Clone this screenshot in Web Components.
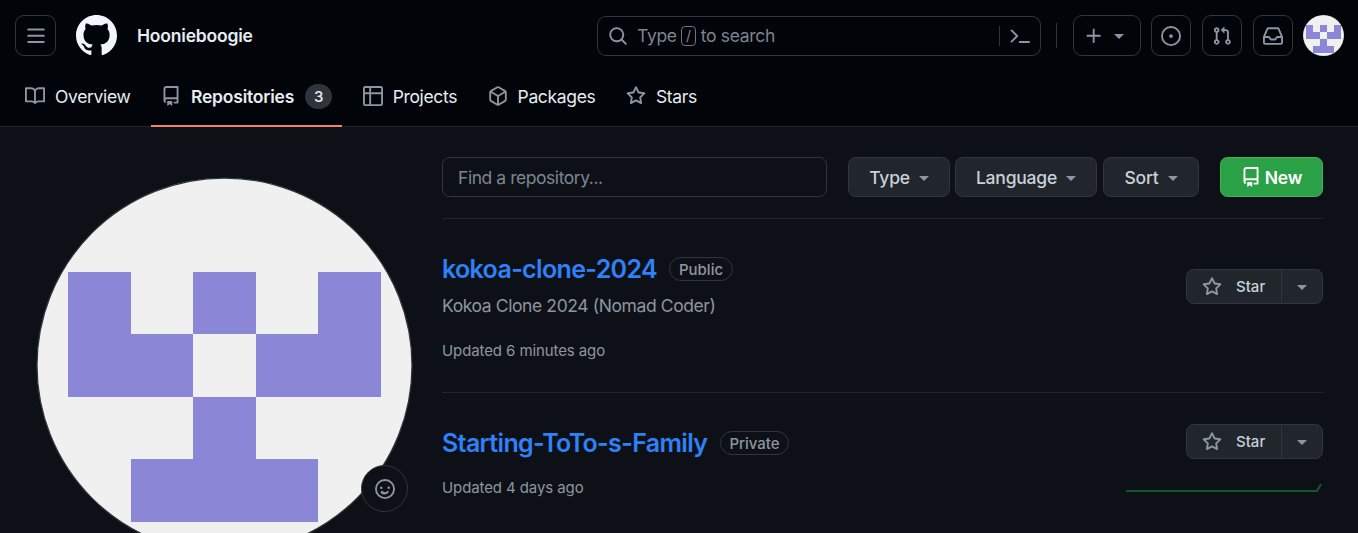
<!DOCTYPE html>
<html lang="en">
<head>
<meta charset="utf-8">
<title>Hoonieboogie repositories</title>
<style>
  html, body { margin: 0; height: 533px; overflow: hidden; background: #0d1117; }
  body { font-family: Inter, "Liberation Sans", sans-serif; color: #e6edf3; }
</style>
</head>
<body>
<profile-page></profile-page>

<script>
const ICONS = {
  bars: 'M1 2.75A.75.75 0 0 1 1.75 2h12.5a.75.75 0 0 1 0 1.5H1.75A.75.75 0 0 1 1 2.75Zm0 5A.75.75 0 0 1 1.75 7h12.5a.75.75 0 0 1 0 1.5H1.75A.75.75 0 0 1 1 7.75ZM1.75 12h12.5a.75.75 0 0 1 0 1.5H1.75a.75.75 0 0 1 0-1.5Z',
  mark: 'M8 0c4.42 0 8 3.58 8 8a8.013 8.013 0 0 1-5.45 7.59c-.4.08-.55-.17-.55-.38 0-.27.01-1.13.01-2.2 0-.75-.25-1.23-.54-1.48 1.78-.2 3.65-.88 3.65-3.95 0-.88-.31-1.59-.82-2.15.08-.2.36-1.02-.08-2.12 0 0-.67-.22-2.2.82-.64-.18-1.32-.27-2-.27-.68 0-1.36.09-2 .27-1.53-1.03-2.2-.82-2.2-.82-.44 1.1-.16 1.92-.08 2.12-.51.56-.82 1.28-.82 2.15 0 3.06 1.86 3.75 3.64 3.95-.23.2-.44.55-.51 1.07-.46.21-1.61.55-2.33-.66-.15-.24-.6-.83-1.23-.82-.67.01-.27.38.01.53.34.19.73.9.82 1.13.16.45.68 1.31 2.69.94 0 .67.01 1.3.01 1.49 0 .21-.15.45-.55.38A7.995 7.995 0 0 1 0 8c0-4.42 3.58-8 8-8Z',
  book: 'M0 1.75A.75.75 0 0 1 .75 1h4.253c1.227 0 2.317.59 3 1.501A3.743 3.743 0 0 1 11.006 1h4.245a.75.75 0 0 1 .75.75v10.5a.75.75 0 0 1-.75.75h-4.507a2.25 2.25 0 0 0-1.591.659l-.622.621a.75.75 0 0 1-1.06 0l-.622-.621A2.25 2.25 0 0 0 5.258 13H.75a.75.75 0 0 1-.75-.75Zm7.251 10.324.004-5.073-.002-2.253A2.25 2.25 0 0 0 5.003 2.5H1.5v9h3.757a3.75 3.75 0 0 1 1.994.574ZM8.755 4.75l-.004 7.322a3.752 3.752 0 0 1 1.992-.572H14.5v-9h-3.495a2.25 2.25 0 0 0-2.25 2.25Z',
  repo: 'M2 2.5A2.5 2.5 0 0 1 4.5 0h8.75a.75.75 0 0 1 .75.75v12.5a.75.75 0 0 1-.75.75h-2.5a.75.75 0 0 1 0-1.5h1.75v-2h-8a1 1 0 0 0-.714 1.7.75.75 0 1 1-1.072 1.05A2.495 2.495 0 0 1 2 11.5Zm10.5-1h-8a1 1 0 0 0-1 1v6.708A2.486 2.486 0 0 1 4.5 9h8ZM5 12.25a.25.25 0 0 1 .25-.25h3.5a.25.25 0 0 1 .25.25v3.25a.25.25 0 0 1-.4.2l-1.45-1.087a.249.249 0 0 0-.3 0L5.4 15.7a.25.25 0 0 1-.4-.2Z',
  table: 'M0 1.75C0 .784.784 0 1.75 0h12.5C15.216 0 16 .784 16 1.75v12.5A1.75 1.75 0 0 1 14.25 16H1.75A1.75 1.75 0 0 1 0 14.25ZM6.5 6.5v8h7.75a.25.25 0 0 0 .25-.25V6.5Zm8-1.5V1.75a.25.25 0 0 0-.25-.25H6.5V5Zm-13 1.5v7.75c0 .138.112.25.25.25H5v-8ZM5 5V1.5H1.75a.25.25 0 0 0-.25.25V5Z',
  package: 'm8.878.392 5.25 3.045c.54.314.872.89.872 1.514v6.098a1.75 1.75 0 0 1-.872 1.514l-5.25 3.045a1.75 1.75 0 0 1-1.756 0l-5.25-3.045A1.75 1.75 0 0 1 1 11.049V4.951c0-.624.332-1.201.872-1.514L7.122.392a1.75 1.75 0 0 1 1.756 0ZM7.875 1.69l-4.63 2.685L8 7.133l4.755-2.758-4.63-2.685a.248.248 0 0 0-.25 0ZM2.5 5.677v5.372c0 .09.047.171.125.216l4.625 2.683V8.432Zm6.25 8.271 4.625-2.683a.25.25 0 0 0 .125-.216V5.677L8.75 8.432Z',
  star: 'M8 .25a.75.75 0 0 1 .673.418l1.882 3.815 4.21.612a.75.75 0 0 1 .416 1.279l-3.046 2.97.719 4.192a.751.751 0 0 1-1.088.791L8 12.347l-3.766 1.98a.75.75 0 0 1-1.088-.79l.72-4.194L.818 6.374a.75.75 0 0 1 .416-1.28l4.21-.611L7.327.668A.75.75 0 0 1 8 .25Zm0 2.445L6.615 5.5a.75.75 0 0 1-.564.41l-3.097.45 2.24 2.184a.75.75 0 0 1 .216.664l-.528 3.084 2.769-1.456a.75.75 0 0 1 .698 0l2.77 1.456-.53-3.084a.75.75 0 0 1 .216-.664l2.24-2.183-3.096-.45a.75.75 0 0 1-.564-.41L8 2.694Z',
  search: 'M10.68 11.74a6 6 0 0 1-7.922-8.982 6 6 0 0 1 8.982 7.922l3.04 3.04a.749.749 0 0 1-.326 1.275.749.749 0 0 1-.734-.215ZM11.5 7a4.499 4.499 0 1 0-8.997 0A4.499 4.499 0 0 0 11.5 7Z',
  terminal: 'M.72 2.97a.75.75 0 0 1 1.06 0l4.5 4.5a.75.75 0 0 1 0 1.06l-4.5 4.5a.75.75 0 0 1-1.06-1.06L4.69 8 .72 4.03a.75.75 0 0 1 0-1.06ZM7.75 12h7.5a.75.75 0 0 1 0 1.5h-7.5a.75.75 0 0 1 0-1.5Z',
  plus: 'M7.75 2a.75.75 0 0 1 .75.75V7h4.25a.75.75 0 0 1 0 1.5H8.5v4.25a.75.75 0 0 1-1.5 0V8.5H2.75a.75.75 0 0 1 0-1.5H7V2.75A.75.75 0 0 1 7.75 2Z',
  issue: 'M8 9.5a1.5 1.5 0 1 0 0-3 1.5 1.5 0 0 0 0 3ZM8 0a8 8 0 1 1 0 16A8 8 0 0 1 8 0ZM1.5 8a6.5 6.5 0 1 0 13 0 6.5 6.5 0 0 0-13 0Z',
  pull: 'M1.5 3.25a2.25 2.25 0 1 1 3 2.122v5.256a2.251 2.251 0 1 1-1.5 0V5.372A2.25 2.25 0 0 1 1.5 3.25Zm5.677-.177L9.573.677A.25.25 0 0 1 10 .854V2.5h1A2.5 2.5 0 0 1 13.5 5v5.628a2.251 2.251 0 1 1-1.5 0V5a1 1 0 0 0-1-1h-1v1.646a.25.25 0 0 1-.427.177L7.177 3.427a.25.25 0 0 1 0-.354ZM3.75 2.5a.75.75 0 1 0 0 1.5.75.75 0 0 0 0-1.5Zm0 9.5a.75.75 0 1 0 0 1.5.75.75 0 0 0 0-1.5Zm8.25.75a.75.75 0 1 0 1.5 0 .75.75 0 0 0-1.5 0Z',
  inbox: 'M2.8 2.06A1.75 1.75 0 0 1 4.41 1h7.18c.7 0 1.333.417 1.61 1.06l2.74 6.395c.04.093.06.194.06.295v4.5A1.75 1.75 0 0 1 14.25 15H1.75A1.75 1.75 0 0 1 0 13.25v-4.5c0-.101.02-.202.06-.295Zm1.61.44a.25.25 0 0 0-.23.152L1.887 8H4.75a.75.75 0 0 1 .6.3L6.625 10h2.75l1.275-1.7a.75.75 0 0 1 .6-.3h2.863L11.82 2.652a.25.25 0 0 0-.23-.152Zm10.09 7h-2.875l-1.275 1.7a.75.75 0 0 1-.6.3h-3.5a.75.75 0 0 1-.6-.3L4.375 9.5H1.5v3.75c0 .138.112.25.25.25h12.5a.25.25 0 0 0 .25-.25Z',
  smiley: 'M8 0a8 8 0 1 1 0 16A8 8 0 0 1 8 0ZM1.5 8a6.5 6.5 0 1 0 13 0 6.5 6.5 0 0 0-13 0Zm3.82 1.636a.75.75 0 0 1 1.038.175l.007.009c.103.118.22.222.35.31.264.178.683.37 1.285.37.602 0 1.02-.192 1.285-.371.13-.088.247-.192.35-.31l.007-.008a.75.75 0 0 1 1.222.87c-.02.03-.4.56-1.245 1.12-.63.418-1.37.638-2.127.629-.946 0-1.652-.308-2.126-.63a3.331 3.331 0 0 1-.715-.657l-.014-.02a.75.75 0 0 1 .183-1.044ZM12 7a1 1 0 1 1-2 0 1 1 0 0 1 2 0ZM5 8a1 1 0 1 1 0-2 1 1 0 0 1 0 2Z'
};

class GhIcon extends HTMLElement {
  connectedCallback() {
    const size = this.getAttribute('size') || 20;
    this.attachShadow({ mode: 'open' });
    this.shadowRoot.innerHTML = `
      <style>
        :host { display: inline-flex; flex: none; width: ${size}px; height: ${size}px; }
        svg { display: block; fill: currentColor; }
      </style>
      <svg width="${size}" height="${size}" viewBox="0 0 16 16" aria-hidden="true"><path fill-rule="evenodd" d="${ICONS[this.getAttribute('name')]}"/></svg>
    `;
  }
}

// same identicon for the big profile picture and the small one in the top bar
class PixelAvatar extends HTMLElement {
  connectedCallback() {
    this.attachShadow({ mode: 'open' });
    this.shadowRoot.innerHTML = `
      <style>
        :host { display: block; }
        svg { display: block; width: 100%; height: 100%; overflow: visible; }
      </style>
      <svg viewBox="0 0 6 6" aria-hidden="true">
        <circle cx="3" cy="3" r="3" fill="#f0f0f0" stroke="#30363d" stroke-width=".02"/>
        <path fill="#8b86d5" shape-rendering="crispEdges" d="M.5 1.5h1v1h-1ZM2.5 1.5h1v1h-1ZM4.5 1.5h1v1h-1ZM.5 2.5h2v1h-2ZM3.5 2.5h2v1h-2ZM2.5 3.5h1v1h-1ZM1.5 4.5h3v1h-3Z"/>
      </svg>
    `;
  }
}

class IconButton extends HTMLElement {
  connectedCallback() {
    this.attachShadow({ mode: 'open' });
    this.shadowRoot.innerHTML = `
      <style>
        :host {
          display: inline-flex; align-items: center; justify-content: center; gap: 10px;
          box-sizing: border-box; height: 41px;
          border: 1px solid #30363d; border-radius: 9px; color: #8d96a0;
        }
      </style>
      <slot></slot>
    `;
  }
}

class CaretDown extends HTMLElement {
  connectedCallback() {
    this.attachShadow({ mode: 'open' });
    this.shadowRoot.innerHTML = `
      <style>
        :host {
          display: inline-block; flex: none; width: 0; height: 0;
          border-top: 5.5px solid currentColor;
          border-left: 5px solid transparent; border-right: 5px solid transparent;
          margin-top: 2px;
        }
      </style>
    `;
  }
}

class GlobalSearch extends HTMLElement {
  connectedCallback() {
    this.attachShadow({ mode: 'open' });
    this.shadowRoot.innerHTML = `
      <style>
        :host {
          display: flex; align-items: center; box-sizing: border-box;
          width: 444px; height: 40px; padding: 0 10px;
          border: 1px solid #30363d; border-radius: 9px;
          color: #7d8590; font-size: 17.5px; letter-spacing: -.3px;
        }
        .hint { flex: 1; display: flex; align-items: center; margin-left: 9px; white-space: nowrap; }
        kbd {
          display: inline-flex; align-items: center; justify-content: center;
          box-sizing: border-box; width: 15px; height: 20px; margin: 0 5px 0 4px;
          border: 1px solid #6e7681; border-radius: 4px;
          font: 400 14px Inter, sans-serif;
        }
        .sep { width: 1px; height: 20px; background: #30363d; margin-right: 10px; }
        gh-icon { color: #8d96a0; }
      </style>
      <gh-icon name="search" size="20"></gh-icon>
      <div class="hint">Type<kbd>/</kbd>to search</div>
      <div class="sep"></div>
      <gh-icon name="terminal" size="20"></gh-icon>
    `;
  }
}

class NavTab extends HTMLElement {
  connectedCallback() {
    this.attachShadow({ mode: 'open' });
    this.shadowRoot.innerHTML = `
      <style>
        :host {
          display: flex; align-items: center; gap: 10px; box-sizing: border-box;
          height: 60px; padding: 0 10px;
          border-bottom: 2px solid transparent;
          color: #e6edf3; font-size: 17.5px; letter-spacing: -.35px; white-space: nowrap;
        }
        :host([selected]) { border-bottom-color: #f78166; font-weight: 600; letter-spacing: -.2px; }
        gh-icon { color: #8d96a0; }
        .count {
          display: none; align-items: center; justify-content: center;
          width: 27px; height: 25px; border-radius: 13px; margin-left: 1px;
          background: #2f343b; font-size: 15px; font-weight: 500; letter-spacing: 0;
        }
        :host([count]) .count { display: flex; }
      </style>
      <gh-icon name="${this.getAttribute('icon')}" size="20"></gh-icon>
      <span><slot></slot></span>
      <span class="count">${this.getAttribute('count') || ''}</span>
    `;
  }
}

class TopHeader extends HTMLElement {
  connectedCallback() {
    this.attachShadow({ mode: 'open' });
    this.shadowRoot.innerHTML = `
      <style>
        :host {
          display: block; box-sizing: border-box; height: 127px;
          background: #010409; border-bottom: 1px solid #21262d;
        }
        .top { display: flex; align-items: center; padding: 15px 14px 0 15px; }
        .brand { flex: 0 0 582px; display: flex; align-items: center; gap: 20px; }
        .brand icon-button { width: 41px; }
        .logo { color: #f0f6fc; }
        .name { font-size: 17.5px; font-weight: 600; color: #e6edf3; letter-spacing: -.2px; }
        .actions { display: flex; align-items: center; margin-left: 15px; }
        .divider { width: 1px; height: 25px; background: #30363d; margin-right: 16px; }
        .add { width: 68px; margin-right: 10px; padding-right: 6px; }
        .round { width: 40px; margin-right: 11px; }
        .round.last { margin-right: 10px; }
        pixel-avatar { width: 41px; height: 41px; }
        nav { display: flex; gap: 10.5px; margin-top: 11px; padding-left: 15px; }
      </style>
      <div class="top">
        <div class="brand">
          <icon-button><gh-icon name="bars" size="20"></gh-icon></icon-button>
          <gh-icon class="logo" name="mark" size="41"></gh-icon>
          <span class="name">Hoonieboogie</span>
        </div>
        <global-search></global-search>
        <div class="actions">
          <div class="divider"></div>
          <icon-button class="add"><gh-icon name="plus" size="20"></gh-icon><caret-down></caret-down></icon-button>
          <icon-button class="round"><gh-icon name="issue" size="20"></gh-icon></icon-button>
          <icon-button class="round"><gh-icon name="pull" size="20"></gh-icon></icon-button>
          <icon-button class="round last"><gh-icon name="inbox" size="20"></gh-icon></icon-button>
          <pixel-avatar></pixel-avatar>
        </div>
      </div>
      <nav>
        <nav-tab icon="book">Overview</nav-tab>
        <nav-tab icon="repo" count="3" selected>Repositories</nav-tab>
        <nav-tab icon="table">Projects</nav-tab>
        <nav-tab icon="package">Packages</nav-tab>
        <nav-tab icon="star">Stars</nav-tab>
      </nav>
    `;
  }
}

class ProfileCard extends HTMLElement {
  connectedCallback() {
    this.attachShadow({ mode: 'open' });
    this.shadowRoot.innerHTML = `
      <style>
        :host { display: block; position: relative; flex: none; width: 375px; height: 375px; margin-top: 51px; }
        pixel-avatar { width: 100%; height: 100%; }
        .status {
          position: absolute; left: 324.5px; top: 287px;
          display: flex; align-items: center; justify-content: center;
          box-sizing: border-box; width: 47px; height: 47px; border-radius: 50%;
          background: #0d1117; border: 1px solid #30363d; color: #8d96a0;
        }
      </style>
      <pixel-avatar></pixel-avatar>
      <div class="status"><gh-icon name="smiley" size="20"></gh-icon></div>
    `;
  }
}

class FilterButton extends HTMLElement {
  connectedCallback() {
    this.attachShadow({ mode: 'open' });
    this.shadowRoot.innerHTML = `
      <style>
        :host {
          display: flex; align-items: center; justify-content: center; gap: 9px;
          box-sizing: border-box; height: 40px;
          background: #21262d; border: 1px solid #30363d; border-radius: 7.5px;
          color: #c9d1d9; font-size: 17.5px; font-weight: 500; letter-spacing: -.2px;
        }
        caret-down { color: #8d96a0; }
      </style>
      <slot></slot><caret-down></caret-down>
    `;
  }
}

class RepoToolbar extends HTMLElement {
  connectedCallback() {
    this.attachShadow({ mode: 'open' });
    this.shadowRoot.innerHTML = `
      <style>
        :host { display: flex; padding-bottom: 21px; border-bottom: 1px solid #21262d; }
        .find {
          box-sizing: border-box; width: 385px; height: 40px; margin-right: 21px; padding-left: 15px;
          display: flex; align-items: center;
          background: #0d1117; border: 1px solid #30363d; border-radius: 7.5px;
          color: #7d8590; font-size: 17.5px; letter-spacing: -.45px;
        }
        .new {
          display: flex; align-items: center; justify-content: center; gap: 4px;
          box-sizing: border-box; width: 103px; height: 40px; margin-left: 21px;
          background: #2aa146; border: 1px solid #3fb25a; border-radius: 7.5px;
          color: #fff; font-size: 17.5px; font-weight: 600; letter-spacing: -.2px;
        }
      </style>
      <div class="find">Find a repository...</div>
      <filter-button style="width:102px;margin-right:5px">Type</filter-button>
      <filter-button style="width:142px;margin-right:6px">Language</filter-button>
      <filter-button style="width:96px">Sort</filter-button>
      <div class="new"><gh-icon name="repo" size="20"></gh-icon>New</div>
    `;
  }
}

class StarButton extends HTMLElement {
  connectedCallback() {
    this.attachShadow({ mode: 'open' });
    this.shadowRoot.innerHTML = `
      <style>
        :host {
          display: flex; box-sizing: border-box; width: 137px; height: 35px;
          background: #21262d; border: 1px solid #30363d; border-radius: 7.5px;
          color: #c9d1d9; font-size: 15px; font-weight: 500;
        }
        .star {
          width: 95px; display: flex; align-items: center; gap: 14px; padding-left: 15px;
          box-sizing: border-box; border-right: 1px solid #30363d;
        }
        .star gh-icon { color: #8d96a0; }
        .more { flex: 1; display: flex; align-items: center; justify-content: center; color: #8d96a0; }
      </style>
      <div class="star"><gh-icon name="star" size="20"></gh-icon>Star</div>
      <div class="more"><caret-down></caret-down></div>
    `;
  }
}

class RepoRow extends HTMLElement {
  connectedCallback() {
    const sparkline = this.hasAttribute('activity')
      ? `<svg class="spark" width="197" height="16" viewBox="0 0 197 16" aria-hidden="true"><path d="M0 12H191L195 5" fill="none" stroke="#15572b" stroke-width="2"/></svg>`
      : '';
    this.attachShadow({ mode: 'open' });
    this.shadowRoot.innerHTML = `
      <style>
        :host {
          display: flex; justify-content: space-between; box-sizing: border-box;
          border-bottom: 1px solid #21262d; padding-bottom: 31px;
        }
        :host([last]) { border-bottom: 0; }
        .info { display: flex; flex-direction: column; padding-top: 35px; }
        .title { display: flex; align-items: center; gap: 12.5px; height: 30px; }
        a { color: #2f81f7; font-size: 25px; font-weight: 600; letter-spacing: -.65px; text-decoration: none; }
        .badge {
          display: flex; align-items: center; box-sizing: border-box; height: 24px; padding: 0 8.5px;
          border: 1px solid #30363d; border-radius: 12px;
          color: #8d96a0; font-size: 15px; font-weight: 500;
        }
        .updated { margin-top: 20px; line-height: 20px; font-size: 15px; color: #8d96a0; letter-spacing: -.1px; }
        .side { display: flex; flex-direction: column; align-items: flex-end; padding-top: var(--star-top, 31px); }
        .spark { display: block; margin-top: 20px; }
      </style>
      <div class="info">
        <div class="title"><a href="#"><slot name="name"></slot></a><span class="badge"><slot name="visibility"></slot></span></div>
        <slot name="description"></slot>
        <div class="updated"><slot name="updated"></slot></div>
      </div>
      <div class="side"><star-button></star-button>${sparkline}</div>
    `;
  }
}

class RepoDescription extends HTMLElement {
  connectedCallback() {
    this.attachShadow({ mode: 'open' });
    this.shadowRoot.innerHTML = `
      <style>
        :host { display: block; margin: 8.5px 0 3.5px; line-height: 25px; font-size: 17.5px; color: #8d96a0; letter-spacing: -.4px; }
      </style>
      <slot></slot>
    `;
  }
}

class ProfilePage extends HTMLElement {
  connectedCallback() {
    this.attachShadow({ mode: 'open' });
    this.shadowRoot.innerHTML = `
      <style>
        :host { display: block; height: 533px; overflow: hidden; }
        .body { display: flex; gap: 30.5px; padding-left: 36.5px; }
        main { width: 881px; padding-top: 30px; }
      </style>
      <top-header></top-header>
      <div class="body">
        <profile-card></profile-card>
        <main>
          <repo-toolbar></repo-toolbar>
          <repo-row style="--star-top:50px">
            <span slot="name">kokoa-clone-2024</span>
            <span slot="visibility">Public</span>
            <repo-description slot="description">Kokoa Clone 2024 (Nomad Coder)</repo-description>
            <span slot="updated">Updated 6 minutes ago</span>
          </repo-row>
          <repo-row activity last style="--star-top:31px">
            <span slot="name">Starting-ToTo-s-Family</span>
            <span slot="visibility">Private</span>
            <span slot="updated">Updated 4 days ago</span>
          </repo-row>
        </main>
      </div>
    `;
  }
}

customElements.define('gh-icon', GhIcon);
customElements.define('pixel-avatar', PixelAvatar);
customElements.define('icon-button', IconButton);
customElements.define('caret-down', CaretDown);
customElements.define('global-search', GlobalSearch);
customElements.define('nav-tab', NavTab);
customElements.define('top-header', TopHeader);
customElements.define('profile-card', ProfileCard);
customElements.define('filter-button', FilterButton);
customElements.define('repo-toolbar', RepoToolbar);
customElements.define('star-button', StarButton);
customElements.define('repo-description', RepoDescription);
customElements.define('repo-row', RepoRow);
customElements.define('profile-page', ProfilePage);
</script>
</body>
</html>
